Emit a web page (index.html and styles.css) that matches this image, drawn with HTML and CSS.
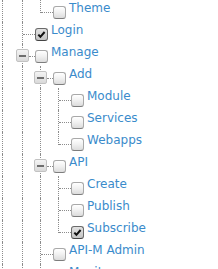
FILE: index.html
```html
<!DOCTYPE html>
<html>
<head>
<meta charset="utf-8">
<link rel="stylesheet" href="styles.css">
</head>
<body>
<div class="tree">
  <div class="row">
    <span class="g0"></span><span class="col line"></span><span class="col node leaf last"></span>
    <span class="cb"></span><span class="lbl">Theme</span>
  </div>
  <div class="row">
    <span class="g0"></span><span class="col node leaf"></span>
    <span class="cb checked"><svg viewBox="0 0 11 11" width="11" height="11"><path d="M2.3 5.6 L4.4 7.8 L8.6 3" fill="none" stroke="#111" stroke-width="2"/></svg></span><span class="lbl">Login</span>
  </div>
  <div class="row">
    <span class="g0"></span><span class="col node exp"><span class="box"></span></span>
    <span class="cb"></span><span class="lbl">Manage</span>
  </div>
  <div class="row">
    <span class="g0"></span><span class="col line"></span><span class="col node exp"><span class="box"></span></span>
    <span class="cb"></span><span class="lbl">Add</span>
  </div>
  <div class="row">
    <span class="g0"></span><span class="col line"></span><span class="col line"></span><span class="col node leaf"></span>
    <span class="cb"></span><span class="lbl">Module</span>
  </div>
  <div class="row">
    <span class="g0"></span><span class="col line"></span><span class="col line"></span><span class="col node leaf"></span>
    <span class="cb"></span><span class="lbl">Services</span>
  </div>
  <div class="row">
    <span class="g0"></span><span class="col line"></span><span class="col line"></span><span class="col node leaf last"></span>
    <span class="cb"></span><span class="lbl">Webapps</span>
  </div>
  <div class="row">
    <span class="g0"></span><span class="col line"></span><span class="col node exp"><span class="box"></span></span>
    <span class="cb"></span><span class="lbl">API</span>
  </div>
  <div class="row">
    <span class="g0"></span><span class="col line"></span><span class="col line"></span><span class="col node leaf"></span>
    <span class="cb"></span><span class="lbl">Create</span>
  </div>
  <div class="row">
    <span class="g0"></span><span class="col line"></span><span class="col line"></span><span class="col node leaf"></span>
    <span class="cb"></span><span class="lbl">Publish</span>
  </div>
  <div class="row">
    <span class="g0"></span><span class="col line"></span><span class="col line"></span><span class="col node leaf last"></span>
    <span class="cb checked"><svg viewBox="0 0 11 11" width="11" height="11"><path d="M2.3 5.6 L4.4 7.8 L8.6 3" fill="none" stroke="#111" stroke-width="2"/></svg></span><span class="lbl">Subscribe</span>
  </div>
  <div class="row">
    <span class="g0"></span><span class="col line"></span><span class="col node leaf"></span>
    <span class="cb"></span><span class="lbl">API-M Admin</span>
  </div>
  <div class="row">
    <span class="g0"></span><span class="col line"></span><span class="col node leaf"></span>
    <span class="cb"></span><span class="lbl">Monitor</span>
  </div>
</div>
</body>
</html>
```
FILE: styles.css
```css
html, body {
  margin: 0;
  padding: 0;
  background: #fff;
  overflow: hidden;
}

.tree {
  display: flex;
  flex-direction: column;
}

.row {
  display: flex;
  align-items: flex-start;
  height: 22px;
}

.g0 {
  flex: none;
  width: 13px;
  height: 22px;
  position: relative;
}

.g0::before {
  content: "";
  position: absolute;
  left: 2px;
  top: 0;
  height: 22px;
  border-left: 1px dotted #8c8c8c;
}

.col {
  flex: none;
  width: 18px;
  height: 22px;
  position: relative;
}

.col.line::before,
.node::before {
  content: "";
  position: absolute;
  left: 9px;
  top: 0;
  height: 22px;
  border-left: 1px dotted #8c8c8c;
}

.node.last::before {
  height: 13px;
}

.leaf::after {
  content: "";
  position: absolute;
  left: 10px;
  top: 12px;
  width: 12px;
  border-top: 1px dotted #8c8c8c;
}

.exp::after {
  content: "";
  position: absolute;
  left: 16px;
  top: 12px;
  width: 6px;
  border-top: 1px dotted #8c8c8c;
}

.box {
  position: absolute;
  left: 3px;
  top: 5px;
  width: 13px;
  height: 13px;
  box-sizing: border-box;
  border: 1px solid #c2c2c2;
  border-radius: 2px;
  background: linear-gradient(#f4f4f4, #d9d9d9);
  z-index: 1;
}

.box::before {
  content: "";
  position: absolute;
  left: 2px;
  right: 2px;
  top: 5px;
  height: 2px;
  background: #6e6e6e;
}

.cb {
  flex: none;
  display: flex;
  align-items: center;
  justify-content: center;
  width: 13px;
  height: 13px;
  margin: 6px 0 0 4px;
  box-sizing: border-box;
  border: 1px solid #a9a9a9;
  border-bottom-color: #7d7d7d;
  border-radius: 3px;
  background: linear-gradient(#ffffff, #f2f2f2 45%, #dcdcdc);
}

.cb.checked {
  border-color: #6a6a6a;
  border-bottom-color: #444;
  background: linear-gradient(#e2e2e2, #c4c4c4);
}

.cb svg {
  display: block;
}

.lbl {
  margin-left: 3px;
  font-family: "DejaVu Sans", sans-serif;
  font-size: 12px;
  line-height: 16px;
  color: #3a8bcb;
  white-space: nowrap;
}
```
